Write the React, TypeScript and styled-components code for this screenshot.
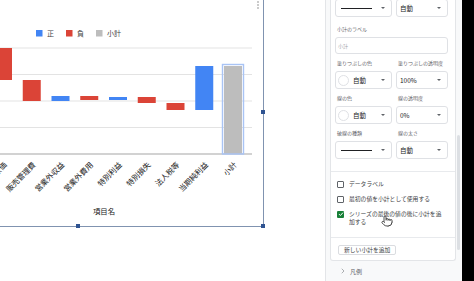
import React from 'react';
import styled, { createGlobalStyle } from 'styled-components';
import { ChevronRight, Pointer } from 'lucide-react';

const GlobalStyle = createGlobalStyle`
  html, body { margin: 0; padding: 0; background: #fff; }
  body {
    font-family: "Noto Sans CJK JP", "Noto Sans", sans-serif;
    color: #202124;
    overflow: hidden;
  }
  * { box-sizing: border-box; }
`;

const BLUE = '#4285f4';
const RED = '#db4437';
const GRAY = '#bdbdbd';

type Kind = 'pos' | 'neg' | 'sub';
type Bar = { label: string; kind: Kind; top: number; bottom: number };

// waterfall steps, in chart pixels (the chart is scrolled, first bars are cut off)
const bars: Bar[] = [
  { label: '売上原価', kind: 'neg', top: 48, bottom: 80 },
  { label: '販売管理費', kind: 'neg', top: 80, bottom: 101 },
  { label: '営業外収益', kind: 'pos', top: 96, bottom: 101 },
  { label: '営業外費用', kind: 'neg', top: 96, bottom: 100 },
  { label: '特別利益', kind: 'pos', top: 97, bottom: 100 },
  { label: '特別損失', kind: 'neg', top: 97, bottom: 103 },
  { label: '法人税等', kind: 'neg', top: 103, bottom: 110 },
  { label: '当期純利益', kind: 'pos', top: 66, bottom: 110 },
  { label: '小計', kind: 'sub', top: 66, bottom: 154 },
];

const fill: Record<Kind, string> = { pos: BLUE, neg: RED, sub: GRAY };
const gridY = [48, 74.5, 101, 127.5];
const barX = (i: number) => 3 + i * 28.75;

const Page = styled.div`
  display: flex;
  width: 474px;
  height: 281px;
  overflow: hidden;
  background: #fff;
`;

const ChartPane = styled.div`
  width: 325px;
  flex: none;
`;

const ChartFrame = styled.div`
  position: relative;
  width: 264px;
  height: 227px;
  border-right: 1px solid #8093b0;
  border-bottom: 1px solid #8093b0;
`;

const Handle = styled.span<{ $x: number; $y: number }>`
  position: absolute;
  left: ${p => p.$x - 2}px;
  top: ${p => p.$y - 2}px;
  width: 4px;
  height: 4px;
  background: #2f5391;
`;

const ChartSvg = styled.svg`
  display: block;
  font-family: "Noto Sans CJK JP", sans-serif;
`;

function WaterfallChart() {
  return (
    <ChartSvg width={263} height={226} viewBox="0 0 263 226">
      <g fontSize={7} fill="#444">
        <rect x={36} y={30} width={6.5} height={6.5} fill={BLUE} />
        <text x={47} y={36}>正</text>
        <rect x={66} y={30} width={6.5} height={6.5} fill={RED} />
        <text x={77} y={36}>負</text>
        <rect x={96} y={30} width={6.5} height={6.5} fill={GRAY} />
        <text x={107} y={36}>小計</text>
      </g>
      {gridY.map(y => (
        <line key={y} x1={0} x2={252} y1={y} y2={y} stroke="#e3e3e3" strokeWidth={1} />
      ))}
      <line x1={0} x2={252} y1={154} y2={154} stroke="#a6a6a6" strokeWidth={1.2} />
      {bars.map((b, i) => (
        <rect key={b.label} x={barX(i) - 9} y={b.top} width={18} height={b.bottom - b.top} fill={fill[b.kind]} />
      ))}
      <rect x={222.5} y={64.5} width={21} height={89.5} fill="none" stroke="#a9c4f5" strokeWidth={1.4} />
      <g fontSize={7.6} fill="#222">
        {bars.map((b, i) => (
          <text
            key={b.label}
            transform={`translate(${barX(i) + 2},${163}) rotate(-45)`}
            textAnchor="end"
            dominantBaseline="central"
          >
            {b.label}
          </text>
        ))}
      </g>
      <text x={104} y={214} textAnchor="middle" fontSize={7.4} fill="#222">
        項目名
      </text>
      <g fill="#888">
        <circle cx={258} cy={2} r={0.8} />
        <circle cx={258} cy={5} r={0.8} />
        <circle cx={258} cy={8} r={0.8} />
      </g>
    </ChartSvg>
  );
}

const Sidebar = styled.aside`
  width: 137px;
  flex: none;
  display: flex;
  background: #f8f9fa;
  border-left: 1px solid #e3e5e8;
  padding-left: 4px;
`;

const SideColumn = styled.div`
  width: 126px;
  display: flex;
  flex-direction: column;
`;

const Card = styled.section`
  background: #fff;
  border: 1px solid #e3e5e8;
  border-top: none;
  border-radius: 0 0 3px 3px;
`;

const Controls = styled.div`
  display: flex;
  flex-direction: column;
  padding: 0 7px 12px 4px;
`;

const Pair = styled.div<{ $mt: number }>`
  display: grid;
  grid-template-columns: 57px 52px;
  column-gap: 4px;
  margin-top: ${p => p.$mt}px;
`;

const Field = styled.div<{ $mt?: number }>`
  display: flex;
  flex-direction: column;
  margin-top: ${p => p.$mt ?? 0}px;
`;

const FieldLabel = styled.div`
  font-size: 5px;
  line-height: 8px;
  height: 8px;
  margin: 0 0 4px 2px;
  color: #5f6368;
  white-space: nowrap;
`;

const Select = styled.div<{ $pl: number }>`
  height: 18px;
  display: flex;
  align-items: center;
  padding: 0 6px 0 ${p => p.$pl}px;
  border: 1px solid #dfe1e5;
  border-radius: 3px;
  background: #fff;
`;

const Value = styled.span`
  flex: 1;
  font-size: 6.5px;
  line-height: 1;
  color: #202124;
  white-space: nowrap;
`;

const Caret = styled.span`
  width: 0;
  height: 0;
  border-left: 2.5px solid transparent;
  border-right: 2.5px solid transparent;
  border-top: 2.5px solid #5f6368;
`;

const LineSample = styled.span`
  width: 31px;
  height: 1px;
  background: #202124;
  margin-right: auto;
`;

const ColorDot = styled.span`
  width: 11px;
  height: 11px;
  border-radius: 50%;
  border: 1px solid #dfe1e5;
  margin-right: 4px;
  flex: none;
`;

const TextInput = styled.div`
  height: 17px;
  display: flex;
  align-items: center;
  padding-left: 2px;
  border: 1px solid #dfe1e5;
  border-radius: 3px;
  font-size: 5px;
  color: #a0a4a8;
`;

const CheckSection = styled.div`
  display: flex;
  flex-direction: column;
  gap: 7px;
  padding: 8px 7px 11px 6px;
  border-top: 1px solid #e8eaed;
`;

const CheckRow = styled.div`
  position: relative;
  display: flex;
  align-items: flex-start;
  gap: 5px;
`;

const Box = styled.span<{ $checked?: boolean }>`
  width: 7px;
  height: 7px;
  margin-top: 0.5px;
  flex: none;
  border-radius: 1px;
  display: flex;
  align-items: center;
  justify-content: center;
  border: ${p => (p.$checked ? 'none' : '1px solid #5f6368')};
  background: ${p => (p.$checked ? '#188038' : '#fff')};
`;

const CheckLabel = styled.span`
  max-width: 94px;
  font-size: 5.8px;
  line-height: 8px;
  color: #3c4043;
`;

const Cursor = styled.span`
  position: absolute;
  left: 44px;
  top: 5px;
  display: flex;
`;

const ButtonSection = styled.div`
  padding: 7px 0 5px 7px;
  border-top: 1px solid #e8eaed;
`;

const AddButton = styled.button`
  height: 10px;
  padding: 0 5px;
  border: 1px solid #dadce0;
  border-radius: 2px;
  background: #fff;
  font-family: inherit;
  font-size: 5.8px;
  line-height: 1;
  color: #3c4043;
  display: flex;
  align-items: center;
`;

const Collapsed = styled.div`
  height: 24px;
  display: flex;
  align-items: center;
  gap: 3px;
  padding-left: 9px;
  font-size: 6px;
  color: #5f6368;
`;

const ScrollTrack = styled.div`
  width: 6px;
  flex: none;
  padding-left: 1px;
`;

const ScrollThumb = styled.div`
  width: 3px;
  height: 115px;
  margin-top: 135px;
  border-radius: 2px;
  background: #dcdfe3;
`;

const BlackEdge = styled.div`
  width: 12px;
  flex: none;
  background: #000;
`;

function Check({ label, checked, cursor }: { label: string; checked?: boolean; cursor?: boolean }) {
  return (
    <CheckRow>
      <Box $checked={checked}>
        {checked && (
          <svg width="6" height="6" viewBox="0 0 6 6">
            <path d="M1 3.1 L2.4 4.5 L5 1.6" fill="none" stroke="#fff" strokeWidth="1" />
          </svg>
        )}
      </Box>
      <CheckLabel>{label}</CheckLabel>
      {cursor && (
        <Cursor>
          <Pointer size={12} strokeWidth={1.6} color="#222" fill="#fff" />
        </Cursor>
      )}
    </CheckRow>
  );
}

export default function App() {
  return (
    <Page>
      <GlobalStyle />
      <ChartPane>
        <ChartFrame>
          <WaterfallChart />
          <Handle $x={78} $y={226} />
          <Handle $x={263} $y={112} />
          <Handle $x={263} $y={226} />
        </ChartFrame>
      </ChartPane>
      <Sidebar>
        <SideColumn>
          <Card>
            <Controls>
              <Pair $mt={-1}>
                <Select $pl={5}>
                  <LineSample />
                  <Caret />
                </Select>
                <Select $pl={3}>
                  <Value>自動</Value>
                  <Caret />
                </Select>
              </Pair>
              <Field $mt={8}>
                <FieldLabel>小計のラベル</FieldLabel>
                <TextInput>小計</TextInput>
              </Field>
              <Pair $mt={5}>
                <Field>
                  <FieldLabel>塗りつぶしの色</FieldLabel>
                  <Select $pl={2}>
                    <ColorDot />
                    <Value>自動</Value>
                    <Caret />
                  </Select>
                </Field>
                <Field>
                  <FieldLabel>塗りつぶしの透明度</FieldLabel>
                  <Select $pl={3}>
                    <Value>100%</Value>
                    <Caret />
                  </Select>
                </Field>
              </Pair>
              <Pair $mt={5}>
                <Field>
                  <FieldLabel>線の色</FieldLabel>
                  <Select $pl={2}>
                    <ColorDot />
                    <Value>自動</Value>
                    <Caret />
                  </Select>
                </Field>
                <Field>
                  <FieldLabel>線の透明度</FieldLabel>
                  <Select $pl={3}>
                    <Value>0%</Value>
                    <Caret />
                  </Select>
                </Field>
              </Pair>
              <Pair $mt={5}>
                <Field>
                  <FieldLabel>破線の種類</FieldLabel>
                  <Select $pl={5}>
                    <LineSample />
                    <Caret />
                  </Select>
                </Field>
                <Field>
                  <FieldLabel>線の太さ</FieldLabel>
                  <Select $pl={3}>
                    <Value>自動</Value>
                    <Caret />
                  </Select>
                </Field>
              </Pair>
            </Controls>
            <CheckSection>
              <Check label="データラベル" />
              <Check label="最初の値を小計として使用する" />
              <Check label="シリーズの最後の値の後に小計を追加する" checked cursor />
            </CheckSection>
            <ButtonSection>
              <AddButton>新しい小計を追加</AddButton>
            </ButtonSection>
          </Card>
          <Collapsed>
            <ChevronRight size={8} strokeWidth={1.5} />
            <span>凡例</span>
          </Collapsed>
        </SideColumn>
        <ScrollTrack>
          <ScrollThumb />
        </ScrollTrack>
      </Sidebar>
      <BlackEdge />
    </Page>
  );
}
